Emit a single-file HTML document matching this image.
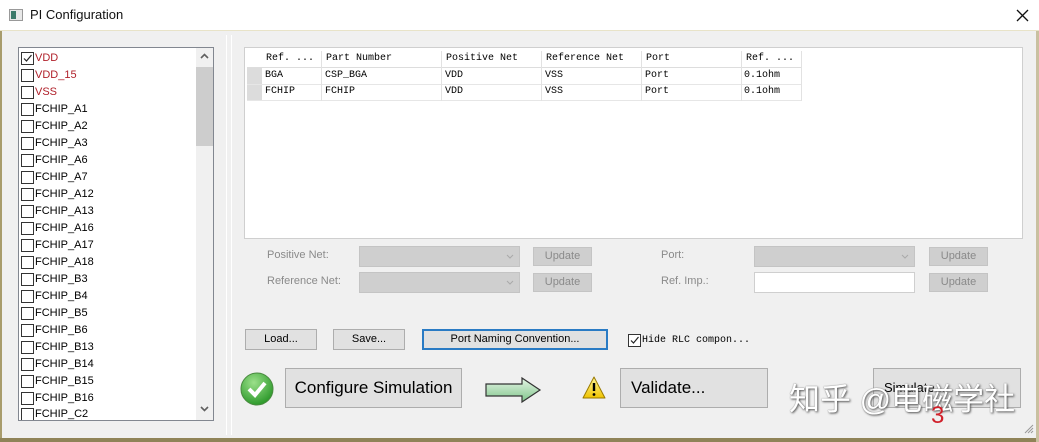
<!DOCTYPE html>
<html><head><meta charset="utf-8"><style>
*{margin:0;padding:0;box-sizing:border-box}
body{width:1039px;height:442px;position:relative;overflow:hidden;background:#f0f0f0;font-family:"Liberation Sans","Noto Sans CJK SC",sans-serif;font-size:11px;color:#000}
.a{position:absolute}
.cb{position:absolute;width:13px;height:13px;border:1px solid #333;background:#fff}
.it{position:absolute;left:21px;height:17px;line-height:17px;padding-left:14px;font-size:11px}
.it .cb{left:0;top:2px}
.tb{font-family:"Liberation Mono","Noto Sans CJK SC",monospace;font-size:10px;white-space:nowrap}
.btn{position:absolute;background:#e1e1e1;border:1px solid #adadad;text-align:center;font-size:11px}
.dis{position:absolute;background:#cfcfcf;border:1px solid #c4c4c4;color:#8a8a8a;text-align:center;line-height:17px;font-size:11px}
.lbl{position:absolute;color:#8a8a8a;font-size:11px}
</style></head><body>
<div class="a" style="left:0;top:0;width:1039px;height:31px;background:#fff;border-bottom:1px solid #e8e3c8"></div>
<div class="a" style="left:9px;top:9px;width:14px;height:12px;border:1px solid #999;background:#e8e8e8"><div class="a" style="left:1px;top:1px;width:5px;height:8px;background:#3c7a6a"></div></div>
<div class="a" style="left:30px;top:7px;font-size:13px;color:#111">PI Configuration</div>
<svg class="a" style="left:1016px;top:9px" width="13" height="13"><path d="M1 1L12 12M12 1L1 12" stroke="#111" stroke-width="1.3"/></svg>
<div class="a" style="left:0;top:31px;width:2px;height:411px;background:#a89c6c"></div>
<div class="a" style="left:0;top:438px;width:1039px;height:4px;background:#8f8358"></div>
<div class="a" style="left:1036px;top:31px;width:3px;height:411px;background:#c9c0a0"></div>
<div class="a" style="left:226px;top:35px;width:1px;height:400px;background:#fff"></div>
<div class="a" style="left:231px;top:35px;width:1px;height:400px;background:#fff"></div>
<div class="a" style="left:18px;top:47px;width:196px;height:374px;background:#fff;border:1px solid #828790;overflow:hidden">
<div class="a" style="left:177px;top:0;width:17px;height:372px;background:#f0f0f0"></div>
<div class="a" style="left:177px;top:19px;width:17px;height:79px;background:#cdcdcd"></div>
<svg class="a" style="left:181px;top:5px" width="9" height="6"><path d="M1 5L4.5 1.5L8 5" stroke="#606060" stroke-width="1.6" fill="none"/></svg>
<svg class="a" style="left:181px;top:358px" width="9" height="6"><path d="M1 1L4.5 4.5L8 1" stroke="#606060" stroke-width="1.6" fill="none"/></svg>
</div>
<div class="a" style="left:0;top:0;width:214px;height:420px;overflow:hidden">
<div class="it" style="top:50px;color:#b0202a"><div class="cb"><svg width="11" height="11" style="position:absolute;left:0;top:0"><path d="M2 5.5L4.5 8L9.5 2" stroke="#222" stroke-width="1.2" fill="none"/></svg></div>VDD</div>
<div class="it" style="top:67px;color:#b0202a"><div class="cb"></div>VDD_15</div>
<div class="it" style="top:84px;color:#b0202a"><div class="cb"></div>VSS</div>
<div class="it" style="top:101px"><div class="cb"></div>FCHIP_A1</div>
<div class="it" style="top:118px"><div class="cb"></div>FCHIP_A2</div>
<div class="it" style="top:135px"><div class="cb"></div>FCHIP_A3</div>
<div class="it" style="top:152px"><div class="cb"></div>FCHIP_A6</div>
<div class="it" style="top:169px"><div class="cb"></div>FCHIP_A7</div>
<div class="it" style="top:186px"><div class="cb"></div>FCHIP_A12</div>
<div class="it" style="top:203px"><div class="cb"></div>FCHIP_A13</div>
<div class="it" style="top:220px"><div class="cb"></div>FCHIP_A16</div>
<div class="it" style="top:237px"><div class="cb"></div>FCHIP_A17</div>
<div class="it" style="top:254px"><div class="cb"></div>FCHIP_A18</div>
<div class="it" style="top:271px"><div class="cb"></div>FCHIP_B3</div>
<div class="it" style="top:288px"><div class="cb"></div>FCHIP_B4</div>
<div class="it" style="top:305px"><div class="cb"></div>FCHIP_B5</div>
<div class="it" style="top:322px"><div class="cb"></div>FCHIP_B6</div>
<div class="it" style="top:339px"><div class="cb"></div>FCHIP_B13</div>
<div class="it" style="top:356px"><div class="cb"></div>FCHIP_B14</div>
<div class="it" style="top:373px"><div class="cb"></div>FCHIP_B15</div>
<div class="it" style="top:390px"><div class="cb"></div>FCHIP_B16</div>
<div class="it" style="top:406px"><div class="cb"></div>FCHIP_C2</div>
</div>
<div class="a" style="left:244px;top:47px;width:779px;height:192px;background:#fff;border:1px solid #cfcfcf"></div>
<div class="a" style="left:247px;top:51px;width:555px;height:17px;border-bottom:1px solid #ddd"></div>
<div class="a" style="left:247px;top:68px;width:15px;height:33px;background:#dcdcdc"></div>
<div class="a" style="left:247px;top:84px;width:555px;height:1px;background:#e6e6e6"></div>
<div class="a" style="left:247px;top:100px;width:555px;height:1px;background:#e6e6e6"></div>
<div class="a" style="left:321px;top:51px;width:1px;height:50px;background:#e2e2e2"></div>
<div class="a" style="left:441px;top:51px;width:1px;height:50px;background:#e2e2e2"></div>
<div class="a" style="left:541px;top:51px;width:1px;height:50px;background:#e2e2e2"></div>
<div class="a" style="left:641px;top:51px;width:1px;height:50px;background:#e2e2e2"></div>
<div class="a" style="left:741px;top:51px;width:1px;height:50px;background:#e2e2e2"></div>
<div class="a" style="left:801px;top:51px;width:1px;height:50px;background:#e2e2e2"></div>
<div class="a tb" style="left:266px;top:53px">Ref. ...</div>
<div class="a tb" style="left:326px;top:53px">Part Number</div>
<div class="a tb" style="left:446px;top:53px">Positive Net</div>
<div class="a tb" style="left:546px;top:53px">Reference Net</div>
<div class="a tb" style="left:646px;top:53px">Port</div>
<div class="a tb" style="left:746px;top:53px">Ref. ...</div>
<div class="a tb" style="left:265px;top:70px">BGA</div>
<div class="a tb" style="left:325px;top:70px">CSP_BGA</div>
<div class="a tb" style="left:445px;top:70px">VDD</div>
<div class="a tb" style="left:545px;top:70px">VSS</div>
<div class="a tb" style="left:645px;top:70px">Port</div>
<div class="a tb" style="left:744px;top:70px">0.1ohm</div>
<div class="a tb" style="left:265px;top:86px">FCHIP</div>
<div class="a tb" style="left:325px;top:86px">FCHIP</div>
<div class="a tb" style="left:445px;top:86px">VDD</div>
<div class="a tb" style="left:545px;top:86px">VSS</div>
<div class="a tb" style="left:645px;top:86px">Port</div>
<div class="a tb" style="left:744px;top:86px">0.1ohm</div>
<div class="lbl" style="left:267px;top:249px">Positive Net:</div>
<div class="lbl" style="left:267px;top:275px">Reference Net:</div>
<div class="lbl" style="left:661px;top:249px">Port:</div>
<div class="lbl" style="left:661px;top:275px">Ref. Imp.:</div>
<div class="dis" style="left:359px;top:246px;width:161px;height:21px"></div>
<div class="dis" style="left:359px;top:272px;width:161px;height:21px"></div>
<div class="dis" style="left:754px;top:246px;width:161px;height:21px"></div>
<div class="a" style="left:754px;top:272px;width:161px;height:21px;background:#fff;border:1px solid #cfcfcf"></div>
<svg class="a" style="left:506px;top:254px" width="8" height="5"><path d="M1 1L4 4L7 1" stroke="#aaa" fill="none"/></svg>
<svg class="a" style="left:506px;top:280px" width="8" height="5"><path d="M1 1L4 4L7 1" stroke="#aaa" fill="none"/></svg>
<svg class="a" style="left:901px;top:254px" width="8" height="5"><path d="M1 1L4 4L7 1" stroke="#aaa" fill="none"/></svg>
<div class="dis" style="left:533px;top:247px;width:59px;height:19px">Update</div>
<div class="dis" style="left:533px;top:273px;width:59px;height:19px">Update</div>
<div class="dis" style="left:929px;top:247px;width:59px;height:19px">Update</div>
<div class="dis" style="left:929px;top:273px;width:59px;height:19px">Update</div>
<div class="btn" style="left:245px;top:329px;width:72px;height:21px;line-height:19px">Load...</div>
<div class="btn" style="left:333px;top:329px;width:72px;height:21px;line-height:19px">Save...</div>
<div class="btn" style="left:422px;top:329px;width:186px;height:21px;line-height:17px;border:2px solid #2a7bc4">Port Naming Convention...</div>
<div class="cb" style="left:628px;top:334px"><svg width="11" height="11" style="position:absolute;left:0;top:0"><path d="M2 5.5L4.5 8L9.5 2" stroke="#222" stroke-width="1.2" fill="none"/></svg></div>
<div class="a tb" style="left:642px;top:335px">Hide RLC compon...</div>
<svg class="a" style="left:240px;top:372px" width="34" height="34"><defs><radialGradient id="g" cx="40%" cy="30%" r="70%"><stop offset="0" stop-color="#9be08a"/><stop offset="1" stop-color="#2e9a2c"/></radialGradient></defs><circle cx="17" cy="17" r="16" fill="url(#g)" stroke="#4a8a40"/><path d="M9 17L15 23L25 11" stroke="#fff" stroke-width="4" fill="none"/></svg>
<div class="btn" style="left:285px;top:368px;width:177px;height:40px;line-height:38px;font-size:17px">Configure Simulation</div>
<svg class="a" style="left:484px;top:376px" width="58" height="28"><defs><linearGradient id="ag" x1="0" y1="0" x2="0" y2="1"><stop offset="0" stop-color="#e6f6e6"/><stop offset="1" stop-color="#7fc48a"/></linearGradient></defs><path d="M2 8H38V2L56 14L38 26V20H2Z" fill="url(#ag)" stroke="#333" stroke-width="1.2"/></svg>
<svg class="a" style="left:581px;top:375px" width="26" height="26"><defs><linearGradient id="wg" x1="0" y1="0" x2="0" y2="1"><stop offset="0" stop-color="#fff59a"/><stop offset="1" stop-color="#f0c400"/></linearGradient></defs><path d="M13 2L24 23H2Z" fill="url(#wg)" stroke="#9a7a00" stroke-linejoin="round"/><path d="M13 8V16" stroke="#000" stroke-width="2.4"/><circle cx="13" cy="19.5" r="1.4"/></svg>
<div class="btn" style="left:620px;top:368px;width:148px;height:40px;line-height:38px;font-size:17px;text-align:left;padding-left:10px">Validate...</div>
<div class="btn" style="left:873px;top:368px;width:148px;height:40px;line-height:38px;font-size:13px;text-align:left;padding-left:10px">Simulate...</div>
<div class="a" style="left:789px;top:374px;font-size:31px;color:#fff;text-shadow:1px 1px 2px #555,0 0 1px #666;white-space:nowrap">知乎 @电磁学社</div>
<div class="a" style="left:931px;top:402px;font-size:24px;color:#d0202a">3</div>
<svg class="a" style="left:1024px;top:424px" width="10" height="10"><path d="M9 1L1 9M9 4L4 9M9 7L7 9" stroke="#999"/></svg>
</body></html>
